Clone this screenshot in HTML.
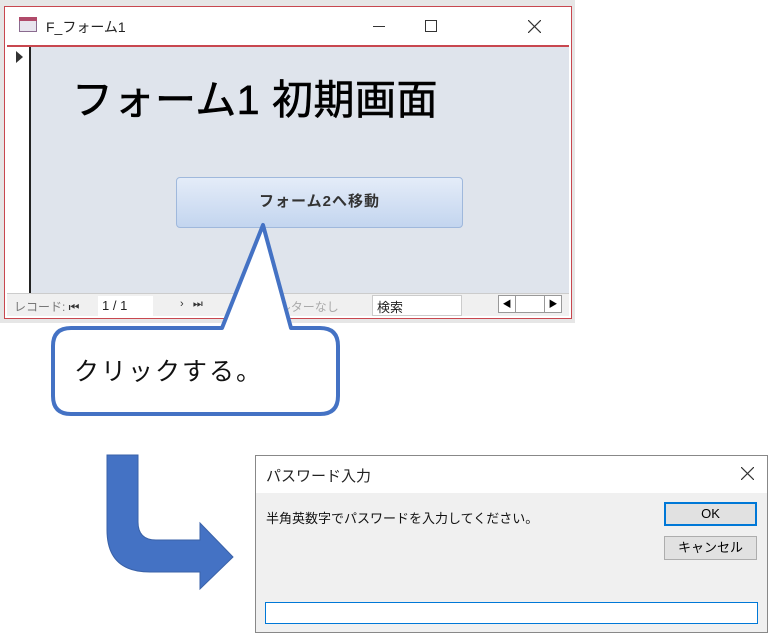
<!DOCTYPE html>
<html><head><meta charset="utf-8"><style>
*{margin:0;padding:0;box-sizing:border-box}
body{width:768px;height:633px;background:#fff;position:relative;overflow:hidden;font-family:"Liberation Sans","Noto Sans CJK JP",sans-serif}
.a{position:absolute}
</style></head><body>
<div class="a" style="left:0;top:0;width:575px;height:323px;background:#e6e6e6"></div>
<div class="a" style="left:4px;top:6px;width:568px;height:313px;border:1px solid #c8474f;background:#fff"></div>
<div class="a" style="left:19px;top:17px;width:18px;height:15px;border:1px solid #8a6b8f;background:#e8e4ee"></div>
<div class="a" style="left:19px;top:17px;width:18px;height:4px;background:#b04a6a"></div>
<div class="a" style="left:46px;top:17px;font-size:14px;color:#222">F_フォーム1</div>
<div class="a" style="left:373px;top:26px;width:12px;height:1px;background:#333"></div>
<div class="a" style="left:425px;top:20px;width:12px;height:12px;border:1px solid #333"></div>
<svg class="a" style="left:528px;top:20px" width="13" height="13"><path d="M0 0L13 13M13 0L0 13" stroke="#333" stroke-width="1.2"/></svg>
<div class="a" style="left:7px;top:45px;width:562px;height:2px;background:#c8474f"></div>
<div class="a" style="left:31px;top:47px;width:538px;height:246px;background:#dfe4ec"></div>
<div class="a" style="left:29px;top:47px;width:2px;height:246px;background:#222"></div>
<div class="a" style="left:16px;top:51px;width:0;height:0;border-left:7px solid #333;border-top:6px solid transparent;border-bottom:6px solid transparent"></div>
<div class="a" style="left:72px;top:66px;font-size:41px;color:#000;letter-spacing:0.5px;-webkit-text-stroke:0.6px #000">フォーム1 初期画面</div>
<div class="a" style="left:176px;top:177px;width:287px;height:51px;border:1px solid #9fb8dc;border-radius:4px;background:linear-gradient(#e4ecf8,#c3d5ef);text-align:center;line-height:48px;font-size:15px;font-weight:bold;color:#333;letter-spacing:1px">フォーム2へ移動</div>
<div class="a" style="left:7px;top:293px;width:562px;height:23px;background:#f0f0f0;border-top:1px solid #ccc"></div>
<div class="a" style="left:14px;top:298px;font-size:12px;color:#777">レコード: <span style="color:#333">⏮</span></div>
<div class="a" style="left:98px;top:296px;width:55px;height:20px;background:#fff;font-size:13px;padding:2px 4px;color:#222">1 / 1</div>
<div class="a" style="left:180px;top:298px;font-size:11px;color:#333">›&nbsp;&nbsp;&nbsp;⏭</div>
<div class="a" style="left:255px;top:298px;font-size:12px;color:#aaa">フィルターなし</div>
<div class="a" style="left:372px;top:295px;width:90px;height:21px;background:#fff;border:1px solid #ccc;font-size:13px;padding:1px 4px;color:#222">検索</div>
<div class="a" style="left:498px;top:295px;width:64px;height:18px;border:1px solid #999;background:#fff"></div>
<div class="a" style="left:498px;top:295px;width:18px;height:18px;border:1px solid #999;font-size:9px;text-align:center;line-height:16px">◀</div>
<div class="a" style="left:544px;top:295px;width:18px;height:18px;border:1px solid #999;font-size:9px;text-align:center;line-height:16px">▶</div>
<svg class="a" style="left:0;top:0" width="768" height="633">
<path d="M72 328 L222 328 L263 225 L291 328 L320 328 Q338 328 338 346 L338 396 Q338 414 320 414 L71 414 Q53 414 53 396 L53 346 Q53 328 71 328 Z" fill="#fff" stroke="#4472c4" stroke-width="4" stroke-linejoin="round"/>
<path d="M107 455 L138 455 L138 522 Q138 540 156 540 L200 540 L200 523 L233 557 L200 589 L200 572 L150 572 Q107 572 107 530 Z" fill="#4472c4" stroke="#3a62a8" stroke-width="1"/>
</svg>
<div class="a" style="left:74px;top:352px;font-size:25px;color:#111;letter-spacing:2px">クリックする。</div>
<div class="a" style="left:255px;top:455px;width:513px;height:178px;border:1px solid #888;background:#f0f0f0"></div>
<div class="a" style="left:256px;top:456px;width:511px;height:37px;background:#fff"></div>
<div class="a" style="left:266px;top:465px;font-size:15px;color:#222">パスワード入力</div>
<svg class="a" style="left:741px;top:467px" width="13" height="13"><path d="M0 0L13 13M13 0L0 13" stroke="#333" stroke-width="1.2"/></svg>
<div class="a" style="left:266px;top:508px;font-size:13px;color:#111">半角英数字でパスワードを入力してください。</div>
<div class="a" style="left:664px;top:502px;width:93px;height:24px;border:2px solid #0078d7;background:#e1e1e1;text-align:center;line-height:20px;font-size:13px">OK</div>
<div class="a" style="left:664px;top:536px;width:93px;height:24px;border:1px solid #adadad;background:#e1e1e1;text-align:center;line-height:22px;font-size:13px">キャンセル</div>
<div class="a" style="left:265px;top:602px;width:493px;height:22px;border:1px solid #0078d7;background:#fff"></div>
</body></html>
